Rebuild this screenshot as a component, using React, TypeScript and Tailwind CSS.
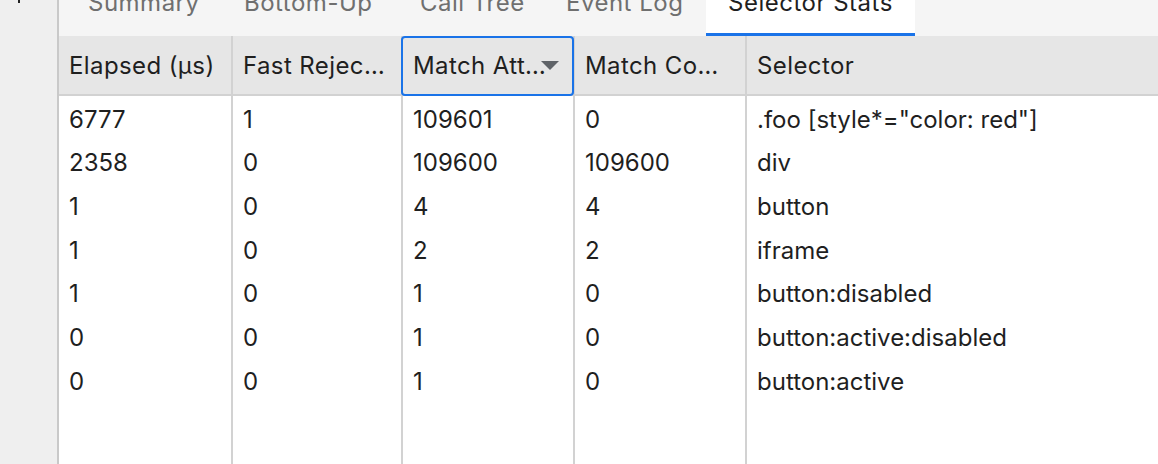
import React from "react";

const rows = [
  ["6777", "1", "109601", "0", '.foo [style*="color: red"]'],
  ["2358", "0", "109600", "109600", "div"],
  ["1", "0", "4", "4", "button"],
  ["1", "0", "2", "2", "iframe"],
  ["1", "0", "1", "0", "button:disabled"],
  ["0", "0", "1", "0", "button:active:disabled"],
  ["0", "0", "1", "0", "button:active"],
];

const tabs = [
  { label: "Summary", w: "w-[156px]" },
  { label: "Bottom-Up", w: "w-[176px]" },
  { label: "Call Tree", w: "w-[146px]" },
  { label: "Event Log", w: "w-[162px]" },
  { label: "Selector Stats", w: "w-[209px]" },
];

const headers = [
  { label: "Elapsed (μs)", pad: "" },
  { label: "Fast Reject Count", pad: "" },
  { label: "Match Attempts", pad: "pr-[8px]" },
  { label: "Match Count", pad: "pr-[8px]" },
  { label: "Selector", pad: "" },
];

const colW = ["w-[174px]", "w-[170px]", "w-[172px]", "w-[172px]", "flex-1"];

export default function App() {
  return (
    <div className="flex h-[464px] w-[1158px] overflow-hidden bg-white text-[#1f1f1f] [font-family:Inter,'Liberation_Sans',sans-serif]">
      {/* left strip */}
      <div className="relative h-full w-[59px] shrink-0 border-r-2 border-[#c9c9c9] bg-[#efefef]">
        <div className="absolute left-[18px] top-0 h-[3px] w-[2px] bg-[#222]" />
      </div>

      <div className="flex min-w-0 flex-1 flex-col">
        {/* tabs */}
        <div className="flex h-[36px] shrink-0 items-stretch overflow-hidden bg-[#f5f5f5] pl-[7px]">
          {tabs.map((t) => {
            const active = t.label === "Selector Stats";
            return (
              <div
                key={t.label}
                className={`flex shrink-0 items-start pl-[22px] ${t.w} ${
                  active ? "border-b-[3px] border-[#1a73e8] bg-white text-[#1f1f1f]" : "text-[#6f6f6f]"
                }`}
              >
                <span className="-mt-[9px] text-[24px] leading-[24px] tracking-[0.5px] whitespace-nowrap">{t.label}</span>
              </div>
            );
          })}
        </div>

        {/* header */}
        <div className="flex h-[60px] shrink-0 border-b-2 border-[#d2d2d2] bg-[#e6e6e6]">
          {headers.map((h, i) => (
            <div
              key={h.label}
              className={`relative flex items-center px-[10px] pt-[2px] ${colW[i]} ${i < 4 ? "border-r-2 border-[#d2d2d2]" : ""}`}
            >
              <span className={`truncate text-[24px] tracking-[0.4px] ${h.pad}`}>{h.label}</span>
              {i === 2 && (
                <>
                  <div className="absolute -left-[2px] top-0 -right-[1px] -bottom-[2px] rounded-[4px] border-2 border-[#1a73e8]" />
                  <svg className="absolute right-[14px] top-[25px]" width="18" height="10" viewBox="0 0 18 10">
                    <path d="M0 0 L18 0 L9 9 Z" fill="#5f6368" />
                  </svg>
                </>
              )}
            </div>
          ))}
        </div>

        {/* body */}
        <div className="flex min-h-0 flex-1 pt-[2px]">
          {colW.map((w, c) => (
            <div key={c} className={`-mt-[2px] flex flex-col pt-[2px] ${w} ${c < 4 ? "border-r-2 border-[#d2d2d2]" : ""}`}>
              {rows.map((r, i) => (
                <div key={i} className="flex h-[43.67px] items-center px-[10px]">
                  <span className="truncate text-[24px]">{r[c]}</span>
                </div>
              ))}
            </div>
          ))}
        </div>
      </div>
    </div>
  );
}
